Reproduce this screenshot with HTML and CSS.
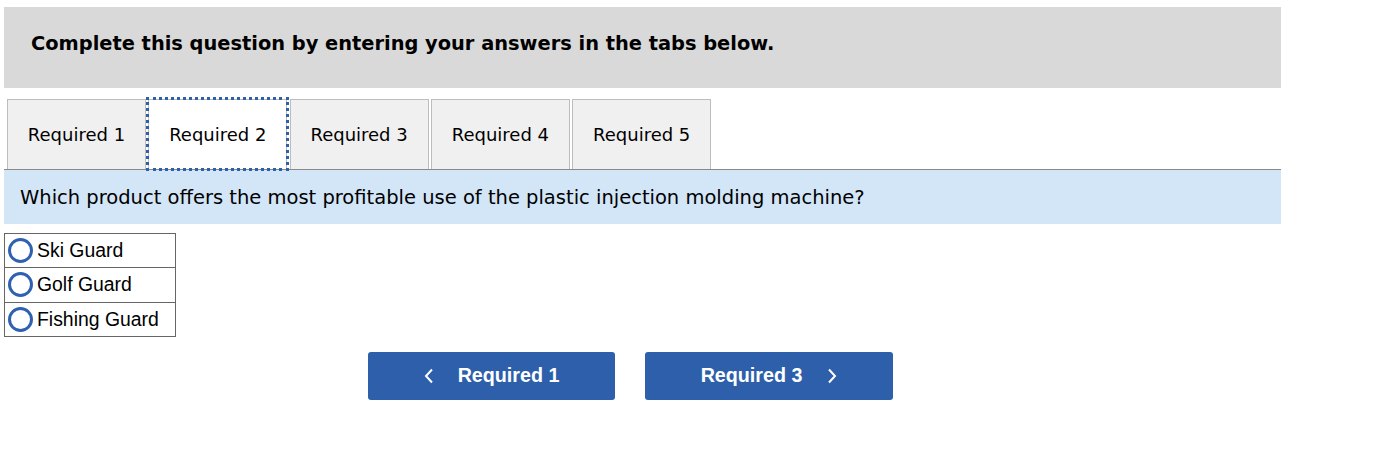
FILE: index.html
```html
<!DOCTYPE html>
<html>
<head>
<meta charset="utf-8">
<link rel="stylesheet" href="styles.css">
</head>
<body>
<div class="page">
  <div class="instructions">Complete this question by entering your answers in the tabs below.</div>
  <div class="tabs">
    <div class="tab">Required 1</div>
    <div class="tab active">Required 2</div>
    <div class="tab">Required 3</div>
    <div class="tab">Required 4</div>
    <div class="tab">Required 5</div>
  </div>
  <div class="question">Which product offers the most profitable use of the plastic injection molding machine?</div>
  <div class="options">
    <div class="option"><span class="radio"></span>Ski Guard</div>
    <div class="option"><span class="radio"></span>Golf Guard</div>
    <div class="option"><span class="radio"></span>Fishing Guard</div>
  </div>
  <div class="nav">
    <button class="navbtn"><svg class="chev left" width="10" height="16" viewBox="0 0 10 16"><path d="M8 1.5 L2 8 L8 14.5" fill="none" stroke="#fff" stroke-width="2"/></svg>Required 1</button>
    <button class="navbtn wide">Required 3<svg class="chev right" width="10" height="16" viewBox="0 0 10 16"><path d="M2 1.5 L8 8 L2 14.5" fill="none" stroke="#fff" stroke-width="2"/></svg></button>
  </div>
</div>
</body>
</html>
```
FILE: styles.css
```css
html, body {
  margin: 0;
  padding: 0;
  background: #fff;
}
.page {
  width: 1277px;
  padding: 7px 0 0 4px;
  font-family: "DejaVu Sans", Verdana, sans-serif;
  color: #000;
}
.instructions {
  background: #d9d9d9;
  height: 81px;
  box-sizing: border-box;
  padding: 0 0 8px 27px;
  display: flex;
  align-items: center;
  font-weight: bold;
  font-size: 19.4px;
}
.tabs {
  display: flex;
  margin-top: 11px;
  padding-left: 3px;
  border-bottom: 1px solid #8a8a8a;
  height: 70px;
}
.tab {
  width: 139px;
  height: 70px;
  box-sizing: border-box;
  margin-right: 2.3px;
  background: #f0f0f0;
  border: 1px solid #bdbdbd;
  border-bottom: none;
  display: flex;
  align-items: center;
  justify-content: center;
  font-size: 18px;
}
.tab.active {
  background: #fff;
  outline: 3px dotted #2e5fab;
  outline-offset: -1px;
  position: relative;
  z-index: 1;
}
.question {
  background: #d3e6f7;
  height: 54px;
  box-sizing: border-box;
  padding-left: 16px;
  display: flex;
  align-items: center;
  font-size: 19.5px;
}
.options {
  margin-top: 9px;
  width: 172px;
  box-sizing: border-box;
  border: 1px solid #666;
  font-family: "Liberation Sans", Arial, sans-serif;
  font-size: 19.4px;
}
.option {
  height: 33.33px;
  display: flex;
  align-items: center;
  padding-left: 3px;
}
.option + .option {
  border-top: 1px solid #666;
}
.radio {
  width: 19px;
  height: 19px;
  border: 3px solid #2e62b1;
  border-radius: 50%;
  margin-right: 4px;
  flex: none;
}
.nav {
  display: flex;
  gap: 30px;
  padding-left: 364px;
  margin-top: 15px;
}
.navbtn {
  width: 247px;
  height: 48px;
  background: #2d5fab;
  color: #fff;
  border: none;
  border-radius: 3px;
  font-family: "Liberation Sans", Arial, sans-serif;
  font-weight: bold;
  font-size: 19.7px;
  display: flex;
  align-items: center;
  justify-content: center;
  padding: 0;
}
.navbtn.wide {
  width: 248px;
}
.chev {
  flex: none;
  display: block;
}
.chev.left {
  margin-right: 24px;
}
.chev.right {
  margin-left: 25px;
}
```
